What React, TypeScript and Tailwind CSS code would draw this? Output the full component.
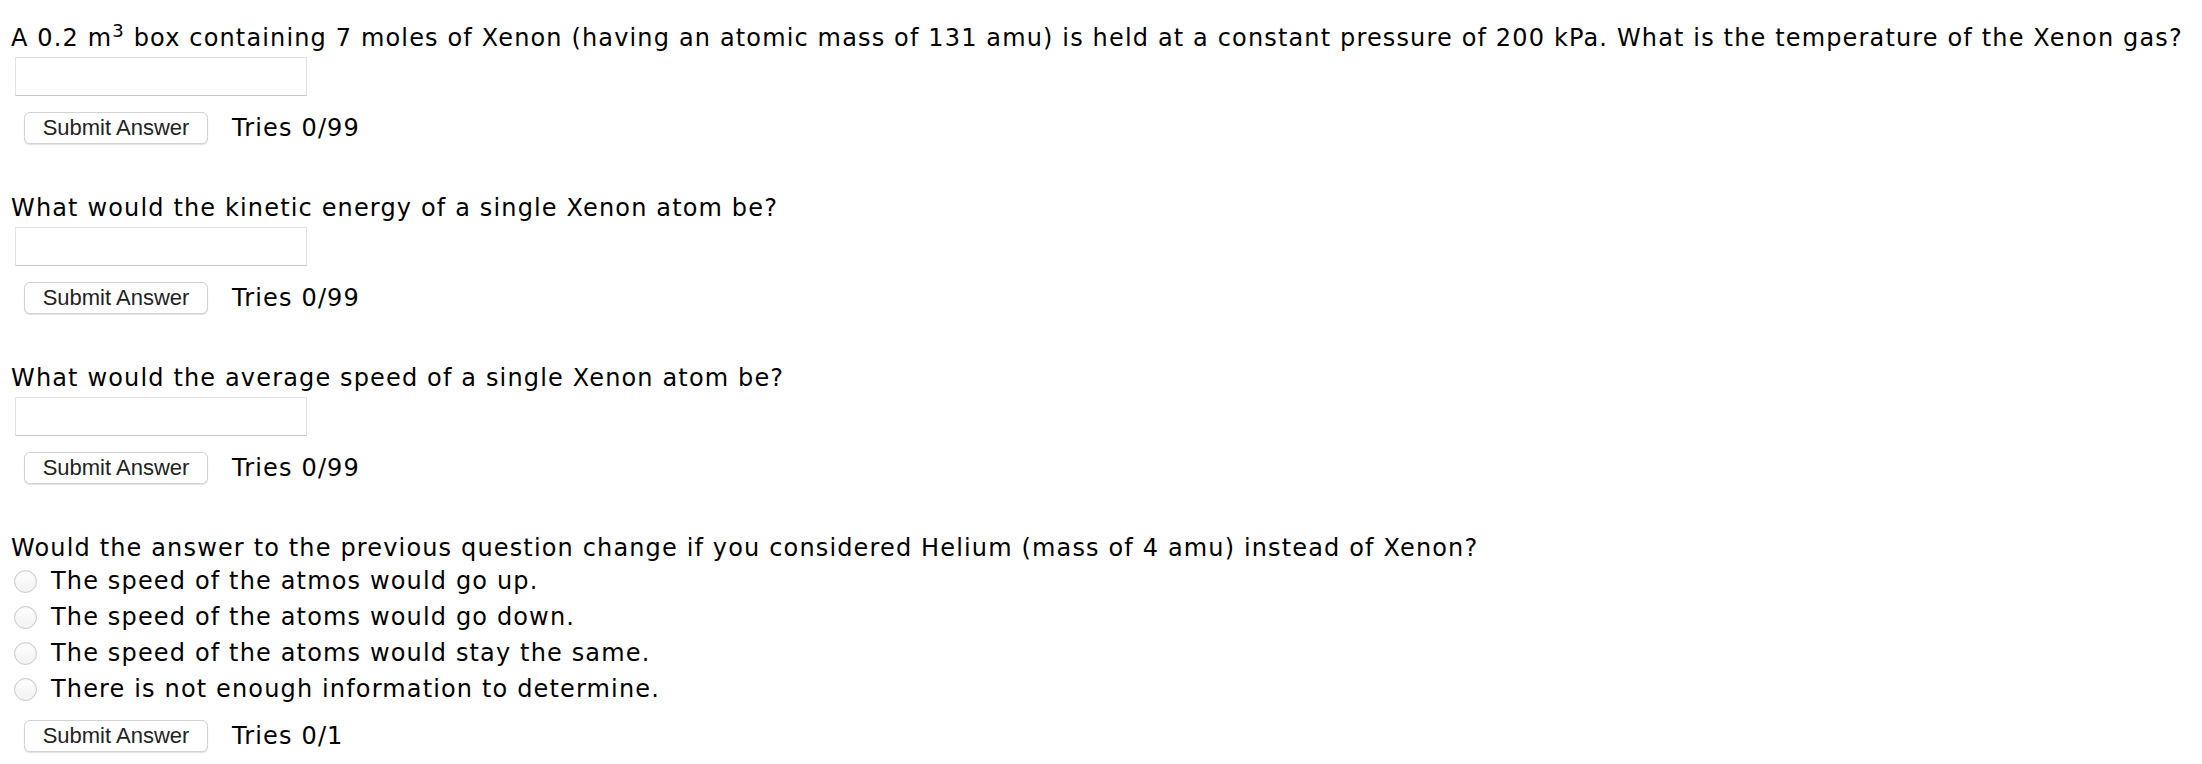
import React from 'react'

const QUESTIONS = [
  { id: 'temp', tries: '0/99' },
  { id: 'ke', text: 'What would the kinetic energy of a single Xenon atom be?', tries: '0/99' },
  { id: 'speed', text: 'What would the average speed of a single Xenon atom be?', tries: '0/99' },
]

const OPTIONS = [
  'The speed of the atmos would go up.',
  'The speed of the atoms would go down.',
  'The speed of the atoms would stay the same.',
  'There is not enough information to determine.',
]

function SubmitRow({ tries }: { tries: string }) {
  return (
    <div className="flex items-center h-[32px] mt-[16px]">
      <button className="ml-[13px] h-[32px] w-[184px] rounded-[6px] border border-[#d3d3d3] bg-white shadow-[0_1px_1px_rgba(0,0,0,0.12)] text-[#222] text-[22px] tracking-normal font-['Liberation_Sans',Arial,sans-serif] leading-none">
        Submit Answer
      </button>
      <span className="ml-[24px]">Tries {tries}</span>
    </div>
  )
}

function AnswerInput() {
  return (
    <input
      type="text"
      className="block ml-[4px] mt-[4px] h-[39px] w-[292px] border border-[#e2e2e2] border-b-[#c4c4c4] bg-white outline-none"
    />
  )
}

export default function App() {
  return (
    <div className="bg-white text-black min-h-[764px] pl-[11px] pt-[23px] font-['DejaVu_Sans',Verdana,sans-serif] text-[24px] leading-[30px] tracking-[1.15px]">
      {QUESTIONS.map((q, i) => (
        <div key={q.id} className={i > 0 ? 'mt-[49px]' : ''}>
          <div className="whitespace-nowrap">
            {q.text ? (
              q.text
            ) : (
              <>
                A 0.2 m<sup>3</sup> box containing 7 moles of Xenon (having an atomic mass of 131 amu) is held at a
                constant pressure of 200 kPa. What is the temperature of the Xenon gas?
              </>
            )}
          </div>
          <AnswerInput />
          <SubmitRow tries={q.tries} />
        </div>
      ))}

      {/* multiple choice */}
      <div className="mt-[49px]">
        <div className="whitespace-nowrap">
          Would the answer to the previous question change if you considered Helium (mass of 4 amu) instead of Xenon?
        </div>
        <div>
          {OPTIONS.map((opt) => (
            <label key={opt} className="flex items-center h-[36px] whitespace-nowrap">
              <span className="ml-[3px] w-[23px] h-[23px] rounded-full border border-[#c9c9c9] bg-gradient-to-b from-white to-[#f1f1f1] shadow-[inset_0_1px_1px_rgba(0,0,0,0.06)]" />
              <span className="ml-[14px]">{opt}</span>
            </label>
          ))}
        </div>
        <div className="-mt-[3px]">
          <SubmitRow tries="0/1" />
        </div>
      </div>
    </div>
  )
}
